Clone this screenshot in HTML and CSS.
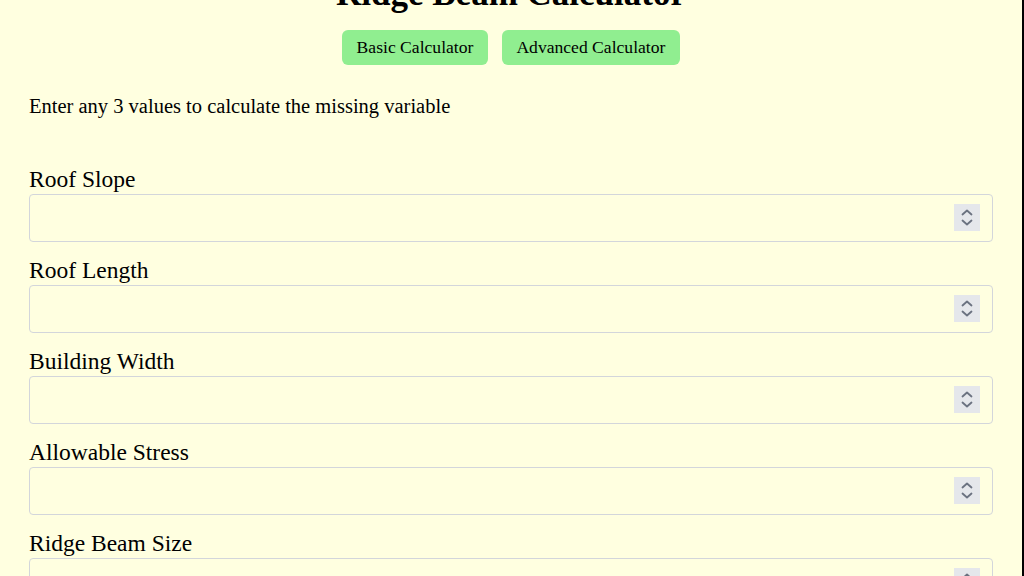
FILE: index.html
```html
<!DOCTYPE html>
<html lang="en">
<head>
<meta charset="utf-8">
<title>Ridge Beam Calculator</title>
<link rel="stylesheet" href="styles.css">
</head>
<body>
<div class="page">
  <h1 class="title">Ridge Beam Calculator</h1>
  <div class="tabs">
    <button class="tab">Basic Calculator</button>
    <button class="tab">Advanced Calculator</button>
  </div>
  <p class="intro">Enter any 3 values to calculate the missing variable</p>
  <form class="fields">
    <div class="field">
      <label class="label">Roof Slope</label>
      <div class="input-wrap">
        <input class="input" type="text">
        <span class="spin"><svg viewBox="0 0 26 27" width="26" height="27"><path d="M8.5 10.5 L13 6.5 L17.5 10.5 M8.5 16.5 L13 20.5 L17.5 16.5" fill="none" stroke="#6b7280" stroke-width="1.8" stroke-linecap="round" stroke-linejoin="round"/></svg></span>
      </div>
    </div>
    <div class="field">
      <label class="label">Roof Length</label>
      <div class="input-wrap">
        <input class="input" type="text">
        <span class="spin"><svg viewBox="0 0 26 27" width="26" height="27"><path d="M8.5 10.5 L13 6.5 L17.5 10.5 M8.5 16.5 L13 20.5 L17.5 16.5" fill="none" stroke="#6b7280" stroke-width="1.8" stroke-linecap="round" stroke-linejoin="round"/></svg></span>
      </div>
    </div>
    <div class="field">
      <label class="label">Building Width</label>
      <div class="input-wrap">
        <input class="input" type="text">
        <span class="spin"><svg viewBox="0 0 26 27" width="26" height="27"><path d="M8.5 10.5 L13 6.5 L17.5 10.5 M8.5 16.5 L13 20.5 L17.5 16.5" fill="none" stroke="#6b7280" stroke-width="1.8" stroke-linecap="round" stroke-linejoin="round"/></svg></span>
      </div>
    </div>
    <div class="field">
      <label class="label">Allowable Stress</label>
      <div class="input-wrap">
        <input class="input" type="text">
        <span class="spin"><svg viewBox="0 0 26 27" width="26" height="27"><path d="M8.5 10.5 L13 6.5 L17.5 10.5 M8.5 16.5 L13 20.5 L17.5 16.5" fill="none" stroke="#6b7280" stroke-width="1.8" stroke-linecap="round" stroke-linejoin="round"/></svg></span>
      </div>
    </div>
    <div class="field">
      <label class="label">Ridge Beam Size</label>
      <div class="input-wrap">
        <input class="input" type="text">
        <span class="spin"><svg viewBox="0 0 26 27" width="26" height="27"><path d="M8.5 10.5 L13 6.5 L17.5 10.5 M8.5 16.5 L13 20.5 L17.5 16.5" fill="none" stroke="#6b7280" stroke-width="1.8" stroke-linecap="round" stroke-linejoin="round"/></svg></span>
      </div>
    </div>
  </form>
</div>
</body>
</html>
```
FILE: styles.css
```css
html {
  background: #000;
}
body {
  margin: 0;
  height: 576px;
  overflow: hidden;
  font-family: "Liberation Serif", "Times New Roman", serif;
  color: #000;
}
.page {
  width: 1022px;
  min-height: 576px;
  background: #ffffe0;
  padding: 0 29px;
  box-sizing: border-box;
}
.title {
  margin: -26px 0 16px;
  font-size: 35px;
  line-height: 40px;
  font-weight: bold;
  text-align: center;
}
.tabs {
  display: flex;
  justify-content: center;
  gap: 14px;
}
.tab {
  font-family: inherit;
  font-size: 17.6px;
  line-height: 20px;
  padding: 7px 14.5px 8px;
  border: none;
  border-radius: 6px;
  background: #90ee90;
  color: #000;
}
.intro {
  margin: 29px 0 48px;
  font-size: 20.5px;
  line-height: 24px;
}
.fields {
  display: flex;
  flex-direction: column;
  gap: 15px;
}
.field {
  display: flex;
  flex-direction: column;
}
.label {
  font-size: 23.5px;
  line-height: 26px;
  margin-bottom: 2px;
}
.input-wrap {
  position: relative;
}
.input {
  display: block;
  width: 100%;
  height: 48px;
  box-sizing: border-box;
  border: 1px solid #d3d6db;
  border-radius: 4px;
  background: transparent;
  font-family: inherit;
  font-size: 18px;
  padding: 0 12px;
}
.spin {
  position: absolute;
  right: 13px;
  top: 10px;
  width: 26px;
  height: 27px;
  background: #e5e7eb;
  display: block;
}
.spin svg {
  display: block;
}
```
